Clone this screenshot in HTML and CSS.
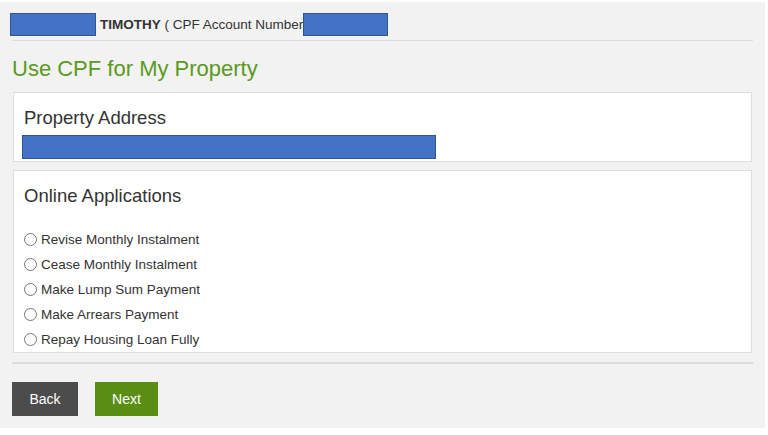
FILE: index.html
```html
<html lang="en">
<head>
    <meta charset="UTF-8">
    <title>Use CPF for My Property</title>
    <link rel="stylesheet" href="styles.css">
</head>
<body>
    <div class="page">
        <div class="account">
            <span class="mask mask-name"></span>
            <b>TIMOTHY</b>&nbsp;( CPF Account Number<span class="mask mask-acc"></span>
        </div>
        <h1 class="title">Use CPF for My Property</h1>
        <div class="card card-address">
            <h2>Property Address</h2>
            <div class="mask mask-address"></div>
        </div>
        <div class="card card-apps">
            <h2>Online Applications</h2>
            <ul class="options">
                <li><label><input type="radio" name="app"> Revise Monthly Instalment</label></li>
                <li><label><input type="radio" name="app"> Cease Monthly Instalment</label></li>
                <li><label><input type="radio" name="app"> Make Lump Sum Payment</label></li>
                <li><label><input type="radio" name="app"> Make Arrears Payment</label></li>
                <li><label><input type="radio" name="app"> Repay Housing Loan Fully</label></li>
            </ul>
        </div>
        <div class="actions">
            <a href="javascript:;" class="btn btn-back">Back</a>
            <a href="javascript:;" class="btn btn-next">Next</a>
        </div>
    </div>
</body>
</html>
```

FILE: styles.css
```css
*{
    margin: 0;
    padding: 0;
    box-sizing: border-box;
}
body{
    background-color: #fff;
    font-family: "Liberation Sans", Arial, sans-serif;
    color: #333;
}
.page{
    width: 765px;
    height: 426px;
    margin-top: 2px;
    background-color: #f2f2f2;
    padding: 0 12px 0 12px;
}
.account{
    display: flex;
    align-items: center;
    height: 39px;
    padding-top: 11px;
    padding-bottom: 4px;
    border-bottom: 1px solid #dcdcdc;
    font-size: 13.5px;
    color: #333;
}
.mask{
    display: inline-block;
    background-color: #4472c4;
    border: 1px solid #2f5597;
}
.mask-name{
    width: 86px;
    height: 23px;
    margin-left: -2px;
    margin-right: 4px;
}
.mask-acc{
    width: 85px;
    height: 23px;
}
.title{
    font-size: 22px;
    font-weight: normal;
    color: #5a9a1c;
    padding-top: 15px;
    height: 51px;
}
.card{
    background-color: #fff;
    border: 1px solid #dedede;
    margin-left: 1px;
    margin-right: 1px;
}
.card h2{
    font-size: 18.5px;
    font-weight: normal;
    color: #333;
}
.card-address{
    height: 70px;
    padding: 14px 10px 0 8px;
}
.card-address h2{
    margin-left: 2px;
    height: 28px;
}
.mask-address{
    display: block;
    width: 414px;
    height: 24px;
}
.card-apps{
    height: 183px;
    margin-top: 8px;
    padding: 14px 10px 0 10px;
}
.options{
    list-style: none;
    margin-top: 25px;
}
.options li{
    height: 25px;
    font-size: 13.5px;
    color: #333;
}
.options label{
    display: flex;
    align-items: center;
    gap: 4px;
}
.options input{
    width: 13px;
    height: 13px;
    margin: 0;
}
.actions{
    margin-top: 9px;
    border-top: 2px solid #dcdcdc;
    padding-top: 18px;
    display: flex;
    gap: 17px;
}
.btn{
    display: inline-block;
    height: 34px;
    line-height: 34px;
    font-size: 14px;
    color: #fff;
    text-decoration: none;
    text-align: center;
}
.btn-back{
    width: 66px;
    background-color: #4d4c4c;
}
.btn-next{
    width: 63px;
    background-color: #5a8e13;
}
```
